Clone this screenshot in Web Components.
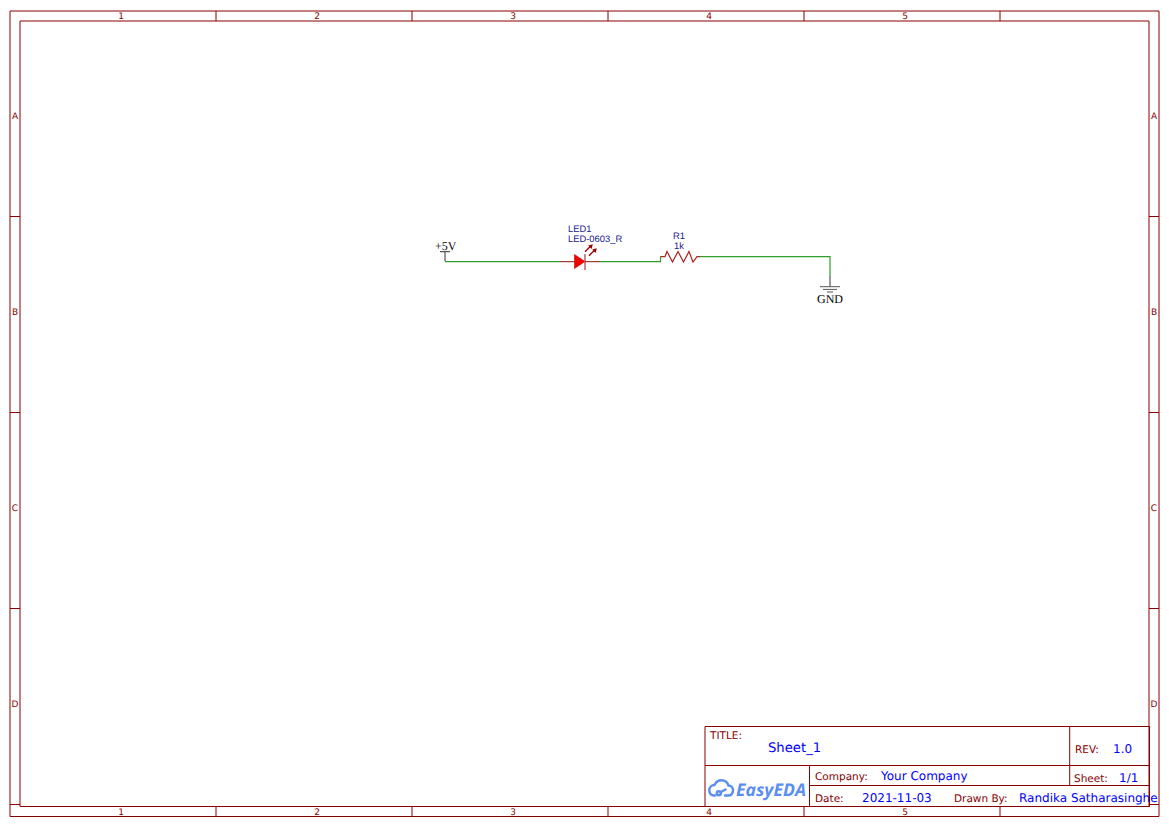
<!DOCTYPE html>
<html>
<head>
<meta charset="utf-8">
<title>Sheet_1</title>
<style>
  html, body { margin: 0; padding: 0; background: #fff; }
</style>
</head>
<body>
<eda-sheet>
  <eda-frame></eda-frame>
  <eda-circuit></eda-circuit>
  <eda-title-block
    title-text="Sheet_1" rev="1.0" company="Your Company" sheet="1/1"
    date="2021-11-03" drawn-by="Randika Satharasinghe"></eda-title-block>
</eda-sheet>

<script>
  const RED = "#880000";

  // The paper: every drawing element is placed on it by its own coordinates
  customElements.define(
    "eda-sheet",
    class extends HTMLElement {
      constructor() {
        super();
        const root = this.attachShadow({ mode: "open" });
        root.innerHTML = `
    <style>
      :host {
        position: relative;
        display: block;
        width: 1169px;
        height: 827px;
        overflow: hidden;
        background: #fff;
      }
      ::slotted(*) {
        position: absolute;
        left: 0;
        top: 0;
      }
    </style>
    <slot></slot>
    `;
      }
    }
  );

  // Outer border, inner border, grid ticks and zone labels
  customElements.define(
    "eda-frame",
    class extends HTMLElement {
      constructor() {
        super();
        const root = this.attachShadow({ mode: "open" });
        let marks = "";
        const cols = ["1", "2", "3", "4", "5"];
        const rows = ["A", "B", "C", "D"];

        cols.forEach((label, i) => {
          const x = 216 + i * 196;
          const mid = 121 + i * 196;
          marks += `<path d="M${x} 11V21M${x} 806.5V816.5"/>`;
          marks += `<text x="${mid}" y="19">${label}</text>`;
          marks += `<text x="${mid}" y="815">${label}</text>`;
        });
        rows.forEach((label, i) => {
          const y = 216.5 + i * 196;
          const mid = 119 + i * 196;
          marks += `<path d="M10 ${y}H20M1149 ${y}H1159"/>`;
          marks += `<text x="15" y="${mid}">${label}</text>`;
          marks += `<text x="1154" y="${mid}">${label}</text>`;
        });

        root.innerHTML = `
    <style>
      :host { display: block; width: 1169px; height: 827px; }
      svg { display: block; }
      path { fill: none; stroke: ${RED}; stroke-width: 1; }
      text {
        fill: ${RED};
        stroke: none;
        font: 9px "DejaVu Sans", sans-serif;
        text-anchor: middle;
        text-rendering: geometricPrecision;
      }
    </style>
    <svg width="1169" height="827" viewBox="0 0 1169 827">
      <path d="M10 11H1159V816.5H10ZM20 21H1149V806.5H20Z"/>
      ${marks}
    </svg>
    `;
      }
    }
  );

  // LED and resistor between +5V and GND
  customElements.define(
    "eda-circuit",
    class extends HTMLElement {
      constructor() {
        super();
        const root = this.attachShadow({ mode: "open" });
        root.innerHTML = `
    <style>
      :host { display: block; width: 1169px; height: 827px; }
      svg { display: block; }
      path { fill: none; stroke-width: 1.2; }
      text { text-rendering: geometricPrecision; }
      .wire { stroke: #2f9e2f; }
      .power { stroke: #555; }
      .pin { stroke: #a83c3c; }
      .part { stroke: #b02020; }
      .arrow { stroke: #a00000; stroke-width: 1.4; }
      .net { fill: #000; font: 12px "Liberation Serif", serif; }
      .ref { fill: #202090; font: 9.4px "Liberation Sans", sans-serif; }
    </style>
    <svg width="1169" height="827" viewBox="0 0 1169 827">
      <path class="wire" d="M445 261.6H560M600 261.6H660.500V256.600M700 256.600H830V276"/>

      <text class="net" x="435" y="250">+5V</text>
      <path class="power" d="M440 251.600H450M445 252V261"/>

      <text class="ref" x="568" y="232">LED1</text>
      <text class="ref" x="568" y="242">LED-0603_R</text>
      <path class="pin" d="M560 261.600H575M585 261.600H600"/>
      <path d="M574.500 254.500L585 261.500L574.500 268.500Z" style="fill:#ee0000;stroke:#cc0000;stroke-width:.6"/>
      <path class="pin" d="M585 254V270"/>
      <path class="arrow" d="M585 251.700L590.500 246.300M589 255.700L594.500 250.300"/>
      <path d="M592.800 244.200L591.600 249L588.200 245.600ZM596.800 248.200L595.600 253L592.200 249.600Z" style="fill:#a00000;stroke:none"/>

      <text class="ref" x="679" y="239" text-anchor="middle">R1</text>
      <text class="ref" x="679" y="249" text-anchor="middle">1k</text>
      <path class="part" d="M660.500 256.600H665L667 251.500L672.500 262L678 251.500L683.500 262L689 251.500L693 262L697 256.600H700"/>

      <path class="power" d="M830 276V286.500"/>
      <path class="power" style="stroke-width:1" d="M820 286.700H840M823 289.400H837M827 292H833"/>
      <text class="net" x="830" y="303" text-anchor="middle">GND</text>
    </svg>
    `;
      }
    }
  );

  // Title block in the lower right corner
  customElements.define(
    "eda-title-block",
    class extends HTMLElement {
      connectedCallback() {
        const root = this.shadowRoot || this.attachShadow({ mode: "open" });
        const get = (name) => this.getAttribute(name) || "";
        root.innerHTML = `
    <style>
      :host { display: block; width: 1169px; height: 827px; }
      svg { display: block; }
      path { fill: none; stroke: ${RED}; stroke-width: 1; }
      text { font-family: "DejaVu Sans", sans-serif; text-rendering: geometricPrecision; }
      .label { fill: ${RED}; font-size: 10.5px; }
      .value { fill: #0000ff; font-size: 12px; }
      .logo-mark { fill: none; stroke: #5a8ff0; stroke-width: 2.5; stroke-linecap: round; stroke-linejoin: round; }
      .logo-word { fill: #5a8ff0; font: italic 700 17.5px "Open Sans", sans-serif; }
    </style>
    <svg width="1169" height="827" viewBox="0 0 1169 827">
      <path d="M705 726.500H1149.500V806.500H705ZM705 765.500H1149.500M809.500 785.500H1149.500M809.500 765.500V806.500M1069.700 726.500V785.500"/>

      <text class="label" x="710" y="739">TITLE:</text>
      <text class="value" x="768" y="752" style="font-size:13.200px">${get("title-text")}</text>
      <text class="label" x="1075" y="753">REV:</text>
      <text class="value" x="1113" y="753">${get("rev")}</text>

      <text class="label" x="815" y="780">Company:</text>
      <text class="value" x="881" y="780">${get("company")}</text>
      <text class="label" x="1074" y="782">Sheet:</text>
      <text class="value" x="1119" y="782">${get("sheet")}</text>

      <text class="label" x="815" y="802">Date:</text>
      <text class="value" x="862" y="802">${get("date")}</text>
      <text class="label" x="954" y="802">Drawn By:</text>
      <text class="value" x="1019" y="802">${get("drawn-by")}</text>

      <path class="logo-mark" d="M715 795.500H714C711 795.500 709.300 793 709.300 790.300C709.300 787.300 711.500 785 714.500 785C716 782 718.500 780.300 721.500 780.300C725 780.300 727.500 782.500 728.500 785.500C731 785.500 733 787.500 733 790.300C733 793.300 731 795.500 728 795.500H725"/>
      <path class="logo-mark" d="M721 792L725.500 789.500"/>
      <circle class="logo-mark" cx="718.800" cy="793.300" r="2"/>
      <text class="logo-word" x="736" y="795.500" textLength="70" lengthAdjust="spacingAndGlyphs">EasyEDA</text>
    </svg>
    `;
      }
    }
  );
</script>
</body>
</html>
